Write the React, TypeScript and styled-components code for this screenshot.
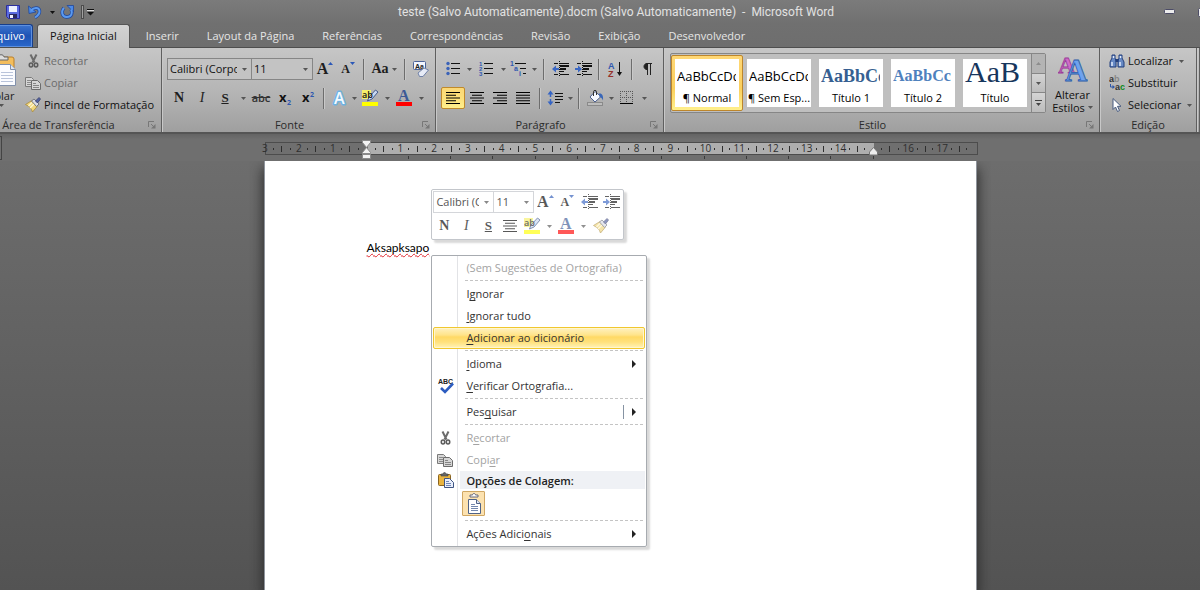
import React from "react";
import styled, { createGlobalStyle, css } from "styled-components";

const ui = `"Open Sans", "Noto Sans", "Liberation Sans", sans-serif`;
const serif = `"Liberation Serif", "DejaVu Serif", serif`;

const GlobalStyle = createGlobalStyle`
  *, *::before, *::after { box-sizing: border-box; }
  body {
    margin: 0;
    font-family: ${ui};
    font-size: 11px;
    line-height: 16px;
    color: #1e1e1e;
    background: #6f6f6f;
  }
  button, select {
    font: inherit;
    color: inherit;
    margin: 0;
    padding: 0;
    border: 0;
    background: none;
    border-radius: 0;
  }
  svg { display: block; flex: none; }
`;

/* ---------- window frame ---------- */

const Window = styled.div`
  display: flex;
  flex-direction: column;
  min-height: 100vh;
  overflow: hidden;
`;

const TitleBar = styled.header`
  display: flex;
  align-items: center;
  height: 24px;
  background: linear-gradient(#7b7b7b, #707070);
`;

const QuickAccess = styled.div`
  display: flex;
  align-items: center;
  width: 95px;
  padding-left: 5px;
`;

const QuickButton = styled.button<{ $w: number }>`
  display: flex;
  align-items: center;
  justify-content: center;
  width: ${(p) => p.$w}px;
  height: 20px;
`;

const QuickDivider = styled.span`
  width: 3px;
  height: 14px;
  margin: 0 2px;
  border: 1px solid #4c4c4c;
  background: #a0a0a0;
`;

const WindowTitle = styled.h1`
  flex: 1;
  margin: 0;
  text-align: center;
  font-family: Roboto, ${ui};
  font-size: 12px;
  font-weight: 400;
  line-height: 16px;
  color: #e2e2e2;
  white-space: pre;
`;

const WindowControls = styled.div`
  display: flex;
  gap: 22px;
  width: 63px;
  padding-left: 27px;
  overflow: hidden;
`;

const ControlButton = styled.button`
  flex: none;
  width: 12px;
  height: 12px;
  display: flex;
  align-items: center;
`;

/* ---------- tabs ---------- */

const TabBar = styled.nav`
  display: flex;
  height: 24px;
  background: linear-gradient(#707070, #6e6e6e);
  border-bottom: 1px solid #4e4e4e;
`;

const FileTab = styled.button`
  width: 58px;
  margin-left: -25px;
  padding-right: 7px;
  text-align: right;
  color: #ffffff;
  border: 1px solid #173f8c;
  border-bottom: 0;
  border-radius: 3px 3px 0 0;
  background: linear-gradient(#3c74cf, #1e53b4 50%, #2a68cc);
  box-shadow: inset 0 0 0 1px #5e90de;
`;

const Tab = styled.button<{ $active?: boolean }>`
  padding: 0 14px;
  color: #e6e6e6;
  white-space: nowrap;
  ${(p) =>
    p.$active &&
    css`
      height: 24px;
      margin: 0 2px 0 4px;
      padding: 0 12px 1px;
      color: #111;
      border: 1px solid #565656;
      border-bottom: 0;
      border-radius: 3px 3px 0 0;
      background: linear-gradient(#d3d3d3, #c6c6c6);
    `}
`;

/* ---------- ribbon ---------- */

const Ribbon = styled.div`
  display: flex;
  height: 86px;
  margin-left: -26px;
  border-bottom: 2px solid #555;
  background: linear-gradient(#c6c6c6, #b4b4b4 55%, #9f9f9f);
`;

const Group = styled.section<{ $w?: number }>`
  display: flex;
  flex-direction: column;
  flex: ${(p) => (p.$w ? `0 0 ${p.$w}px` : "1 1 0")};
  border-right: 1px solid #5f5f5f;
  box-shadow: inset 1px 0 0 #c8c8c8;
`;

const GroupBody = styled.div`
  display: flex;
  flex: 1;
  padding: 2px 0 0 5px;
`;

const GroupFooter = styled.footer`
  display: flex;
  align-items: center;
  height: 16px;
  padding: 2px 5px 0;
  color: #2b2b2b;
  text-align: center;
`;

const GroupName = styled.h2<{ $inset?: boolean }>`
  flex: 1;
  margin: 0;
  padding-right: ${(p) => (p.$inset ? 10 : 0)}px;
  font-size: 11px;
  font-weight: 400;
  white-space: nowrap;
`;

const Rows = styled.div`
  display: flex;
  flex-direction: column;
  padding-top: 7px;
  gap: 5px;
`;

const Row = styled.div`
  display: flex;
  align-items: center;
  height: 24px;
`;

const ToolButton = styled.button<{ $w?: number; $on?: boolean; $tight?: boolean }>`
  display: flex;
  align-items: center;
  justify-content: center;
  flex: none;
  width: ${(p) => p.$w ?? 24}px;
  height: 22px;
  gap: ${(p) => (p.$tight ? 0 : 3)}px;
  ${(p) =>
    p.$on &&
    css`
      border: 1px solid #c08a2b;
      border-radius: 2px;
      background: linear-gradient(#fbd877, #fde07a 50%, #fff08c);
    `}
`;

const Divider = styled.span`
  flex: none;
  width: 1px;
  height: 21px;
  margin: 0 4px;
  background: #6d6d6d;
  box-shadow: 1px 0 0 #c9c9c9;
`;

const Letter = styled.span<{ $size: number; $bold?: boolean; $italic?: boolean }>`
  font-family: ${serif};
  font-size: ${(p) => p.$size}px;
  font-weight: ${(p) => (p.$bold ? 700 : 400)};
  font-style: ${(p) => (p.$italic ? "italic" : "normal")};
  line-height: 16px;
`;

const Struck = styled.s`
  font-size: 11px;
  font-weight: 600;
  line-height: 16px;
  color: #333;
`;

const Combo = styled.label<{ $w: number; $light?: boolean }>`
  display: flex;
  align-items: center;
  flex: none;
  width: ${(p) => p.$w}px;
  height: 22px;
  padding: 0 4px 0 2px;
  border: 1px solid ${(p) => (p.$light ? "#d4d6da" : "#868686")};
  background: ${(p) => (p.$light ? "#ffffff" : "#c3c3c3")};
  color: ${(p) => (p.$light ? "#555" : "#111")};

  & + & {
    border-left-width: 0;
  }

  select {
    flex: 1;
    width: 0;
    height: 18px;
    margin-right: 5px;
    appearance: none;
    overflow: hidden;
    outline: 0;
  }
`;

/* clipboard */

const PasteButton = styled.button`
  display: flex;
  flex-direction: column;
  align-items: center;
  width: 40px;
  margin-left: 2px;
  padding-top: 4px;

  svg + span {
    margin-top: 2px;
  }
`;

const Stack = styled.div`
  display: flex;
  flex-direction: column;
  padding-left: 4px;
`;

const StackButton = styled.button<{ $dim?: boolean }>`
  display: flex;
  align-items: center;
  height: 22px;
  gap: 3px;
  white-space: nowrap;
  color: ${(p) => (p.$dim ? "#6c6c6c" : "#111")};

  svg:last-child:not(:first-child) {
    margin-left: 3px;
  }
`;

/* styles gallery */

const Gallery = styled.div`
  display: flex;
  height: 60px;
  margin: 3px 0 0 1px;
  border: 1px solid #868686;
  border-radius: 2px;
  background: #bfbfbf;
`;

const StyleCard = styled.button<{ $on?: boolean }>`
  display: flex;
  width: 72px;
  height: 56px;
  margin-top: 1px;
  padding: 3px;
  border: 1px solid transparent;
  border-radius: 2px;
  ${(p) =>
    p.$on &&
    css`
      border-color: #bd862c;
      background: linear-gradient(#ffd876, #fbcf5c 60%, #fff08c);
    `}
`;

const StyleFace = styled.span`
  display: flex;
  flex-direction: column;
  width: 64px;
  height: 48px;
  overflow: hidden;
  background: #fff;
  color: #000;
`;

const Sample = styled.span<{ $size: number; $color?: string; $serif?: boolean; $bold?: boolean }>`
  flex: none;
  height: 31px;
  margin: 0 3px 0 2px;
  overflow: hidden;
  text-align: left;
  white-space: nowrap;
  font-family: ${(p) => (p.$serif ? serif : ui)};
  font-size: ${(p) => p.$size}px;
  font-weight: ${(p) => (p.$bold ? 700 : 400)};
  line-height: ${(p) => (p.$size > 20 ? 26 : 34)}px;
  color: ${(p) => p.$color ?? "#000"};
`;

const SampleName = styled.span`
  text-align: center;
  white-space: nowrap;
`;

const GalleryScroll = styled.div`
  display: flex;
  flex-direction: column;
  width: 14px;
  border-left: 1px solid #868686;
`;

const ScrollButton = styled.button`
  display: flex;
  flex: 1;
  align-items: center;
  justify-content: center;
  background: linear-gradient(#d4d4d4, #bcbcbc);

  & + & {
    border-top: 1px solid #868686;
  }
  &:disabled {
    background: #b4b4b4;
  }
`;

const ChangeStyles = styled.button`
  display: flex;
  flex-direction: column;
  align-items: center;
  flex: 1;
  padding-top: 4px;
  line-height: 13px;
  color: #111;

  span {
    display: flex;
    align-items: center;
    gap: 3px;
  }
  svg + span {
    margin-top: 5px;
  }
`;

/* ---------- workspace ---------- */

const RulerBar = styled.div`
  display: flex;
  height: 27px;
  padding-top: 8px;
  background: linear-gradient(#646464, #6f6f6f 20%);
`;

const TabStopBox = styled.div`
  width: 2px;
  height: 24px;
  margin-top: -6px;
  border: 1px solid #444;
  border-left: 0;
`;

const RulerColumn = styled.div`
  width: 713px;
  margin: 0 auto;
  position: relative;
  left: 20px;
`;

const Ruler = styled.div`
  display: flex;
  height: 13px;
  border: 1px solid #4c4c4c;
  color: #2e2e2e;
  font-size: 10px;
  line-height: 11px;
`;

const RulerZone = styled.div<{ $w?: number; $lit?: boolean }>`
  display: flex;
  flex: ${(p) => (p.$w ? `0 0 ${p.$w}px` : "1")};
  background: ${(p) => (p.$lit ? "#aeaeae" : "transparent")};
`;

const RulerCell = styled.span<{ $w?: number }>`
  display: grid;
  grid-template-columns: repeat(4, 1fr);
  justify-items: center;
  align-items: center;
  flex: ${(p) => (p.$w ? `0 0 ${p.$w}px` : "1")};
  margin: 0 5px 0 -5px;
  height: 11px;

  i {
    width: 1px;
    height: 2px;
    background: #2e2e2e;
  }
  i:nth-child(3) {
    height: 6px;
  }
`;

const TabStops = styled.div`
  display: flex;
  height: 6px;
  margin: 0 104px 0 102px;

  span {
    flex: 1;
    height: 3px;
    margin-top: 1px;
    border-right: 1px solid #3a3a3a;
  }
`;

const Marker = styled.span<{ $x: number; $y: number }>`
  position: absolute;
  left: ${(p) => p.$x}px;
  top: ${(p) => p.$y}px;
`;

const Workspace = styled.main`
  display: flex;
  flex: 1;
  padding-left: 40px;
  background: linear-gradient(#6d6d6d, #535353);
`;

const Page = styled.article`
  width: 713px;
  margin: 0 auto;
  padding: 79px 102px 0;
  background: #fff;
  border-left: 1px solid #8f949c;
  border-right: 1px solid #8f949c;
  box-shadow: 0 8px 12px 1px #2c2c2c;
  clip-path: inset(0 -14px 0 -14px);
`;

const Word = styled.span`
  position: relative;
  display: inline-block;
  padding-right: 2px;
  font-family: Lato, ${ui};
  font-size: 12px;
  line-height: 16px;
  color: #000;
`;

const Misspelled = styled.span`
  text-decoration: underline wavy #e0282e 1px;
  text-underline-offset: 1px;
  text-decoration-skip-ink: none;
`;

const MiniToolbar = styled.div`
  position: absolute;
  left: 100%;
  bottom: 16px;
  width: 193px;
  padding: 0 2px 1px 1px;
  border: 1px solid #c3c6cb;
  border-radius: 2px;
  background: #fff;
  box-shadow: 3px 3px 2px #d9d9d9;
  font-family: ${ui};
  font-size: 11px;
`;

const Faded = styled.span`
  display: contents;

  button > * {
    opacity: 0.65;
  }
`;

/* context menu */

const Menu = styled.ul`
  position: absolute;
  left: 100%;
  top: 15px;
  width: 216px;
  margin: 0;
  padding: 1px;
  list-style: none;
  border: 1px solid #a7abb0;
  border-radius: 2px;
  background: linear-gradient(90deg, #fff 25px, #e2e3e6 25px, #e2e3e6 26px, #fff 26px);
  box-shadow: 3px 3px 2px #d9d9d9;
  font-family: ${ui};
  font-size: 11px;
`;

const MenuButton = styled.button<{ $hot?: boolean }>`
  display: grid;
  grid-template-columns: 33px 1fr auto;
  align-items: center;
  width: 100%;
  height: 22px;
  padding-right: 9px;
  text-align: left;
  white-space: nowrap;
  color: #333;

  &:disabled {
    color: #a3a3a3;
  }
  u {
    text-underline-offset: 2px;
    text-decoration-thickness: 1px;
    text-decoration-skip-ink: none;
  }
  ${(p) =>
    p.$hot &&
    css`
      grid-template-columns: 32px 1fr auto;
      border: 1px solid #f0c72f;
      border-radius: 2px;
      background: linear-gradient(#fff1c1, #ffe48a 35%, #ffd965 45%, #ffe17c 70%, #fff3b8);
      box-shadow: inset 0 0 0 1px #fff6cf;
    `}
`;

const MenuIcon = styled.span`
  display: flex;
  padding-left: 4px;
`;

const SubArrow = styled.span<{ $split?: boolean }>`
  display: flex;
  align-items: center;
  height: 14px;
  padding-left: 8px;
  border-left: ${(p) => (p.$split ? "1px solid #8693a3" : "0")};
`;

const MenuRule = styled.li`
  height: 4px;
  margin-left: 32px;
  padding-top: 1px;

  &::before {
    content: "";
    display: block;
    height: 1px;
    background: repeating-linear-gradient(90deg, #c4c4c4 0 3px, transparent 3px 5px);
  }
`;

const MenuHeading = styled.li`
  display: grid;
  grid-template-columns: 27px 1fr;
  align-items: center;
  height: 18px;

  strong {
    padding: 1px 0 0 6px;
    line-height: 17px;
    font-weight: 600;
    color: #222;
    background: #eff1f5;
  }
`;

const PasteOptions = styled.li`
  height: 30px;
  padding: 2px 0 0 29px;
`;

const PasteOption = styled.button`
  display: flex;
  align-items: center;
  justify-content: center;
  width: 23px;
  height: 25px;
  border: 1px solid #d0a763;
  border-radius: 1px;
  background: #fce2b0;
`;

/* ---------- icons ---------- */

const Down = ({ c = "#555" }: { c?: string }) => (
  <svg width="5" height="3" viewBox="0 0 5 3" aria-hidden="true">
    <path d="M0 0h5L2.500 3z" fill={c} />
  </svg>
);

const Right = () => (
  <svg width="4" height="8" viewBox="0 0 4 8" aria-hidden="true">
    <path d="M0 0l4 4-4 4z" fill="#222" />
  </svg>
);

const Launcher = () => (
  <svg width="8" height="8" viewBox="0 0 8 8" aria-hidden="true">
    <path d="M.5 6V.5H6" stroke="#777" fill="none" />
    <path d="M3 3l3 3" stroke="#777" />
    <path d="M7.500 3v4.500H3z" fill="#777" />
  </svg>
);

const SaveIcon = () => (
  <svg width="16" height="16" viewBox="0 0 16 16" aria-hidden="true">
    <path d="M1.500 1.500h13v13h-11l-2-2z" fill="#5b6be0" stroke="#2c2f9c" />
    <path d="M4 2h8v6H4z" fill="#eef2ff" />
    <path d="M4 10h8v4H4z" fill="#2a2a5c" />
    <path d="M5 11h3v3H5z" fill="#f4f4ff" />
  </svg>
);

const UndoIcon = () => (
  <svg width="14" height="14" viewBox="0 0 14 14" aria-hidden="true">
    <path d="M3 5.500C6 2 11 2 11.500 6c.3 3-2 5-4.500 6.500" fill="none" stroke="#20479c" strokeWidth="3.400" />
    <path d="M.5 1l.5 7.500 7-1.500z" fill="#4c8ae8" stroke="#20479c" strokeWidth=".8" />
    <path d="M3 5.500C6 2 11 2 11.500 6c.3 3-2 5-4.500 6.500" fill="none" stroke="#5a9af0" strokeWidth="2" />
  </svg>
);

const RedoIcon = () => (
  <svg width="14" height="14" viewBox="0 0 14 14" aria-hidden="true">
    <path d="M4 3C1 6 1.500 11.500 6.500 12c5 .2 6.500-4 4.500-7.500" fill="none" stroke="#20479c" strokeWidth="3.400" />
    <path d="M7 .5h6.500V7z" fill="#4c8ae8" stroke="#20479c" strokeWidth=".8" />
    <path d="M4 3C1 6 1.500 11.500 6.500 12c5 .2 6.500-4 4.500-7.500" fill="none" stroke="#5a9af0" strokeWidth="2" />
  </svg>
);

const CustomizeIcon = () => (
  <svg width="7" height="7" viewBox="0 0 7 7" aria-hidden="true">
    <path d="M0 .5h7" stroke="#111" />
    <path d="M0 1.500h7" stroke="#ddd" />
    <path d="M0 3h7L3.500 6.500z" fill="#111" />
  </svg>
);

const PasteBig = () => (
  <svg width="32" height="32" viewBox="0 0 32 32" aria-hidden="true">
    <rect x="3" y="3" width="26" height="27" rx="2" fill="#f3bd5c" stroke="#b97f2a" />
    <path d="M9 6V3h4c0-3 6-3 6 0h4v3z" fill="#ddd" stroke="#666" />
    <path d="M13.500 10.500h12l5 5v16h-17z" fill="#fbfcff" stroke="#8190aa" />
    <path d="M25.500 10.500v5h5" fill="#dfe6f4" stroke="#8190aa" />
    <path d="M16 18.500h12M16 21.500h12M16 24.500h12M16 27.500h12" stroke="#b8c3da" />
  </svg>
);

const CutIcon = () => (
  <svg width="16" height="16" viewBox="0 0 16 16" aria-hidden="true">
    <path d="M5.500 1.500l4 8M11.500 1.500l-4 8" stroke="#6c6c6c" strokeWidth="2" />
    <ellipse cx="6" cy="12" rx="1.700" ry="2" fill="none" stroke="#5c5c5c" strokeWidth="1.600" />
    <ellipse cx="11" cy="12" rx="1.700" ry="2" fill="none" stroke="#5c5c5c" strokeWidth="1.600" />
  </svg>
);

const CopyIcon = () => (
  <svg width="16" height="16" viewBox="0 0 16 16" aria-hidden="true">
    <path d="M.5 2.500h6l2 2v7h-8z" fill="#d6d6d6" stroke="#7a7a7a" />
    <path d="M2 5.500h4M2 7.500h4M2 9.500h4" stroke="#8a8a8a" />
    <path d="M6.500 5.500h6l3 3v6h-9z" fill="#d6d6d6" stroke="#6c6c6c" />
    <path d="M8 8.500h3M8 10.500h6M8 12.500h6" stroke="#858585" />
  </svg>
);

const BrushIcon = () => (
  <svg width="16" height="16" viewBox="0 0 16 16" aria-hidden="true">
    <path d="M.5 7.500l6.500-4 5.500 5.500-5 6c-1-3.500-3-5.500-7-7.500z" fill="#f0d67c" stroke="#a98a3a" strokeWidth=".8" />
    <path d="M5 11l4-4M3.500 9L7 5.500" stroke="#fff6cf" strokeWidth="1.300" />
    <path d="M6.500 4L9 2l5 5-2.500 2.500z" fill="#d9dbe4" stroke="#60626e" strokeWidth=".8" />
    <path d="M10.500 4L14 .5 15.500 2 12.500 6z" fill="#5361a0" stroke="#39406c" strokeWidth=".8" />
  </svg>
);

const GrowMark = ({ up }: { up?: boolean }) => (
  <svg width="5" height="16" viewBox="0 0 5 16" aria-hidden="true">
    <path d={up ? "M0 4h5L2.500 1z" : "M0 1h5L2.500 4z"} fill="#2b58b8" />
  </svg>
);

const ClearFormatIcon = () => (
  <svg width="18" height="18" viewBox="0 0 18 18" aria-hidden="true">
    <rect x="1.500" y="1.500" width="12" height="8" rx="1" fill="#f2f6ff" stroke="#4c6397" />
    <text x="3" y="8.500" fontSize="7" fontWeight="700" fontFamily="Liberation Sans, sans-serif" fill="#222">Aa</text>
    <path d="M6 13l6-5 4.500 2-5.500 6.500H7.500z" fill="#e7ebf6" stroke="#7182a8" />
  </svg>
);

const GlowAIcon = () => (
  <svg width="18" height="18" viewBox="0 0 18 18" aria-hidden="true">
    <text x="4" y="15" fontSize="16" fontWeight="600" fontFamily="Open Sans, sans-serif" fill="#f4faff" stroke="#6fb2e0" strokeWidth="3" paintOrder="stroke" strokeLinejoin="round">A</text>
  </svg>
);

const HighlightIcon = () => (
  <svg width="18" height="18" viewBox="0 0 18 18" aria-hidden="true">
    <rect x="1" y="1" width="9" height="9" fill="#f6f06a" />
    <path d="M14.500 1l2.500 2-6 7-4.500 2 1.500-4z" fill="#c9d8f2" stroke="#43598a" />
    <text x="1" y="9" fontSize="9" fontWeight="600" fontFamily="Open Sans, sans-serif" fill="#111">ab</text>
    <rect x="1" y="13" width="16" height="4" fill="#ffff00" />
  </svg>
);

const FontColorIcon = () => (
  <svg width="18" height="18" viewBox="0 0 18 18" aria-hidden="true">
    <text x="3" y="12" fontSize="16" fontWeight="700" fontFamily="Liberation Serif, serif" fill="#3c5a96">A</text>
    <rect x="1" y="13" width="16" height="4" fill="#ff0000" />
  </svg>
);

const BulletsIcon = () => (
  <svg width="16" height="16" viewBox="0 0 16 16" aria-hidden="true">
    <g fill="#3a62b8">
      <circle cx="3" cy="2.500" r="1.700" />
      <circle cx="3" cy="7.500" r="1.700" />
      <circle cx="3" cy="12.500" r="1.700" />
    </g>
    <path d="M6 2.500h9M6 7.500h9M6 12.500h9" stroke="#111" />
  </svg>
);

const NumbersIcon = () => (
  <svg width="16" height="16" viewBox="0 0 16 16" aria-hidden="true">
    <g fill="#2f57b0" fontSize="6" fontWeight="700" fontFamily="Liberation Sans, sans-serif">
      <text x="1" y="5">1</text>
      <text x="1" y="10">2</text>
      <text x="1" y="15">3</text>
    </g>
    <path d="M6 2.500h9M6 7.500h9M6 12.500h9" stroke="#111" />
  </svg>
);

const MultilevelIcon = () => (
  <svg width="18" height="16" viewBox="0 0 18 16" aria-hidden="true">
    <g fill="#2f57b0" fontSize="7" fontWeight="700" fontFamily="Liberation Sans, sans-serif">
      <text x="1" y="5">1</text>
      <text x="5" y="10">a</text>
      <text x="10" y="15">i</text>
    </g>
    <path d="M6 2.500h11M11 7.500h6M14 12.500h3" stroke="#111" />
  </svg>
);

const IndentIcon = ({ dir }: { dir: "in" | "out" }) => (
  <svg width="17" height="16" viewBox="0 0 17 16" aria-hidden="true">
    <path d="M2 2.500h4M8 2.500h9M2 13.500h4M8 13.500h9M8 10.500h4" stroke="#111" />
    <path d="M8 5h9M8 8h6" stroke="#111" strokeWidth="2" />
    <path d="M7.500 0v16" stroke="#111" strokeDasharray="1 1" />
    <path d={dir === "out" ? "M0 8l4-3.500V7h3v2H4v2.500z" : "M7 8L3 4.500V7H0v2h3v2.500z"} fill="#3a67c4" />
  </svg>
);

const SortIcon = () => (
  <svg width="16" height="16" viewBox="0 0 16 16" aria-hidden="true">
    <g fontSize="9" fontWeight="700" fontFamily="Liberation Sans, sans-serif">
      <text x="1" y="7.500" fill="#2f57b0">A</text>
      <text x="1" y="15.500" fill="#96302a">Z</text>
    </g>
    <path d="M12.500 1v11" stroke="#111" />
    <path d="M10 11h5l-2.500 4z" fill="#111" />
  </svg>
);

const PilcrowIcon = () => (
  <svg width="12" height="14" viewBox="0 0 12 14" aria-hidden="true">
    <path d="M5 7.500C1 7.500 1 1.500 5 1.500z" fill="#222" stroke="#222" />
    <path d="M5 1.500h5M5.500 1v12M8.500 1v12" stroke="#222" />
  </svg>
);

const LINES = {
  left: "M1 .5h14M1 3.500h10M1 6.500h14M1 9.500h10M1 12.500h14",
  center: "M1 .5h14M3 3.500h10M1 6.500h14M3 9.500h10M1 12.500h14",
  right: "M1 .5h14M5 3.500h10M1 6.500h14M5 9.500h10M1 12.500h14",
  justify: "M1 .5h14M1 3.500h14M1 6.500h14M1 9.500h14M1 12.500h14",
};

const AlignIcon = ({ kind }: { kind: keyof typeof LINES }) => (
  <svg width="16" height="12" viewBox="0 0 16 13" preserveAspectRatio="none" aria-hidden="true">
    <path d={LINES[kind]} stroke="#000" strokeWidth="1.200" />
  </svg>
);

const SpacingIcon = () => (
  <svg width="16" height="16" viewBox="0 0 16 16" aria-hidden="true">
    <path d="M3.500 3v10" stroke="#3564c4" strokeWidth="1.500" strokeDasharray="4 2" />
    <path d="M.5 4.500h6l-3-4zM.5 11.500h6l-3 4z" fill="#3564c4" />
    <path d="M8 3.500h8M8 6.500h8M8 9.500h8M8 12.500h5" stroke="#111" />
  </svg>
);

const BucketIcon = () => (
  <svg width="17" height="16" viewBox="0 0 17 16" aria-hidden="true">
    <path d="M8 1.500l6 5-6 5.500-5-5z" fill="#f5f8ff" stroke="#4a5f8f" />
    <path d="M6.500 6V1.500c0-1.500 3-1.500 3 0V5" fill="none" stroke="#333" />
    <path d="M12 3.500c3-.5 4.500 2 4 7-1-2-2-3.500-3.500-3.500z" fill="#3866b8" />
    <rect x=".5" y="12.500" width="15" height="3" fill="#bcbcbc" stroke="#8a8a8a" />
  </svg>
);

const BordersIcon = () => (
  <svg width="14" height="14" viewBox="0 0 14 14" aria-hidden="true">
    <path d="M0 .5h13M0 6.500h13M.5 0v12M6.500 0v12M12.500 0v12" stroke="#555" strokeDasharray="1 1" />
    <path d="M0 12.500h13" stroke="#000" />
  </svg>
);

const ChangeStylesIcon = () => (
  <svg width="30" height="29" viewBox="0 0 30 29" aria-hidden="true">
    <g fontFamily="Liberation Serif, serif" fontWeight="700">
      <text x="0" y="19" fontSize="24" fill="#d06cc8" stroke="#9a3c98" strokeWidth=".8">A</text>
      <text x="7" y="27" fontSize="31" fill="#6ea2ee" stroke="#2c5ba8" strokeWidth=".8">A</text>
    </g>
  </svg>
);

const BinocularsIcon = () => (
  <svg width="16" height="15" viewBox="0 0 16 15" aria-hidden="true">
    <path d="M3 1h3v3l1 3v6H1V8l2-4zM10 1h3v3l2 4v5H9V7l1-3z" fill="#6789c4" stroke="#233f7c" />
    <path d="M6.500 5h3v3h-3z" fill="#233f7c" />
    <path d="M3 8v4M11 8v4M4.500 2v2M11.500 2v2" stroke="#e3ecfb" strokeWidth="1.500" />
  </svg>
);

const ReplaceIcon = () => (
  <svg width="16" height="16" viewBox="0 0 16 16" aria-hidden="true">
    <g fontFamily="Liberation Sans, sans-serif" fontWeight="700" fontSize="9">
      <text x="0" y="7" fill="#333">a</text>
      <text x="5" y="7" fill="#888">b</text>
      <text x="6" y="15" fill="#333">a</text>
      <text x="11" y="15" fill="#0d8a1c">c</text>
    </g>
    <path d="M1.500 9v3H4" fill="none" stroke="#2d56a8" />
    <path d="M3.500 10l2.500 2-2.500 2z" fill="#2d56a8" />
  </svg>
);

const CursorIcon = () => (
  <svg width="16" height="16" viewBox="0 0 16 16" aria-hidden="true">
    <path d="M4 1.500v11l2.500-2.500 2 4.500 2-1-2-4.200H12z" fill="#fff" stroke="#465a80" />
  </svg>
);

const SpellIcon = () => (
  <svg width="18" height="16" viewBox="0 0 18 16" aria-hidden="true">
    <text x="1" y="6" fontSize="7" fontWeight="700" fontFamily="Liberation Sans, sans-serif" fill="#222">ABC</text>
    <path d="M4 10l4 4 8-8.500" fill="none" stroke="#2c5cc0" strokeWidth="2.600" />
  </svg>
);

const PasteSmall = () => (
  <svg width="17" height="16" viewBox="0 0 17 16" aria-hidden="true">
    <rect x="1.500" y="2.500" width="12" height="11" rx="1" fill="#e9b440" stroke="#8a6420" />
    <path d="M4 4V2h2c0-2 3-2 3 0h2v2z" fill="#666" stroke="#444" strokeWidth=".6" />
    <path d="M7.500 6.500h5l4 4v5h-9z" fill="#e8eefb" stroke="#3f5583" />
    <path d="M9 9.500h3M9 11.500h5M9 13.500h5" stroke="#6f86b5" />
  </svg>
);

const KeepSourceIcon = () => (
  <svg width="18" height="22" viewBox="0 0 18 22" aria-hidden="true">
    <path d="M5 4V2h2.500c0-2 3-2 3 0H13v2z" fill="#fff" stroke="#667" />
    <path d="M3.500 6.500h8l4 4v10h-12z" fill="#fff" stroke="#4f6287" />
    <path d="M11.500 6.500v4h4" fill="#dfe6f4" stroke="#4f6287" />
    <path d="M6 11.500h4M6 13.500h7M6 15.500h7M6 17.500h7" stroke="#7488ae" />
  </svg>
);

/* ---------- composed parts ---------- */

type GroupProps = { name: string; width?: number; launcher?: boolean; children: React.ReactNode };

const RibbonGroup = ({ name, width, launcher = true, children }: GroupProps) => (
  <Group $w={width}>
    <GroupBody>{children}</GroupBody>
    <GroupFooter>
      <GroupName $inset={launcher}>{name}</GroupName>
      {launcher && (
        <button aria-label={`Opções de ${name}`}>
          <Launcher />
        </button>
      )}
    </GroupFooter>
  </Group>
);

const Select = ({ label, value, width, light }: { label: string; value: string; width: number; light?: boolean }) => (
  <Combo $w={width} $light={light}>
    <select aria-label={label} defaultValue={value}>
      <option>{value}</option>
    </select>
    <Down c={light ? "#888" : "#555"} />
  </Combo>
);

const Arrow = ({ width = 10, label }: { width?: number; label: string }) => (
  <ToolButton $w={width} aria-label={label}>
    <Down />
  </ToolButton>
);

const STYLES = [
  { name: "¶ Normal", sample: "AaBbCcDd", size: 13, on: true },
  { name: "¶ Sem Esp...", sample: "AaBbCcDd", size: 13 },
  { name: "Título 1", sample: "AaBbCc", size: 18, serif: true, bold: true, color: "#365f91" },
  { name: "Título 2", sample: "AaBbCc", size: 16, serif: true, bold: true, color: "#4f81bd" },
  { name: "Título", sample: "AaB", size: 30, serif: true, color: "#17365d" },
];

const TABS = ["Inserir", "Layout da Página", "Referências", "Correspondências", "Revisão", "Exibição", "Desenvolvedor"];

const Cells = ({ labels, width }: { labels: string[]; width?: number }) => (
  <>
    {labels.map((l, i) => (
      <RulerCell key={i} $w={width}>
        <span>{l}</span>
        <i />
        <i />
        <i />
      </RulerCell>
    ))}
  </>
);

type ItemProps = {
  icon?: React.ReactNode;
  children: React.ReactNode;
  disabled?: boolean;
  hot?: boolean;
  sub?: boolean;
  split?: boolean;
};

const MenuItem = ({ icon, children, disabled, hot, sub, split }: ItemProps) => (
  <li>
    <MenuButton disabled={disabled} $hot={hot}>
      <MenuIcon>{icon}</MenuIcon>
      <span>{children}</span>
      {sub && (
        <SubArrow $split={split}>
          <Right />
        </SubArrow>
      )}
    </MenuButton>
  </li>
);

export default function App() {
  return (
    <Window>
      <GlobalStyle />
      <TitleBar>
        <QuickAccess>
          <QuickButton $w={16} aria-label="Salvar"><SaveIcon /></QuickButton>
          <QuickButton $w={28} aria-label="Desfazer"><UndoIcon /></QuickButton>
          <QuickButton $w={6} aria-label="Opções de desfazer"><Down c="#111" /></QuickButton>
          <QuickButton $w={24} aria-label="Refazer"><RedoIcon /></QuickButton>
          <QuickDivider />
          <QuickButton $w={8} aria-label="Personalizar"><CustomizeIcon /></QuickButton>
        </QuickAccess>
        <WindowTitle>teste (Salvo Automaticamente).docm (Salvo Automaticamente)  -  Microsoft Word</WindowTitle>
        <WindowControls>
          <ControlButton aria-label="Minimizar">
            <svg width="12" height="6" viewBox="0 0 12 6"><rect x=".5" y=".5" width="10" height="4" rx="1" fill="#ececec" stroke="#4c4c66" /></svg>
          </ControlButton>
          <ControlButton aria-label="Maximizar">
            <svg width="12" height="9" viewBox="0 0 12 9"><rect x=".5" y=".5" width="11" height="8" rx="1" fill="#ececec" stroke="#4c4c66" /></svg>
          </ControlButton>
        </WindowControls>
      </TitleBar>

      <TabBar>
        <FileTab>Arquivo</FileTab>
        <Tab $active>Página Inicial</Tab>
        {TABS.map((t) => (
          <Tab key={t}>{t}</Tab>
        ))}
      </TabBar>

      <Ribbon>
        <RibbonGroup name="Área de Transferência" width={188}>
          <PasteButton>
            <PasteBig />
            <span>Colar</span>
            <Down />
          </PasteButton>
          <Stack>
            <StackButton $dim><CutIcon />Recortar</StackButton>
            <StackButton $dim><CopyIcon />Copiar</StackButton>
            <StackButton><BrushIcon />Pincel de Formatação</StackButton>
          </Stack>
        </RibbonGroup>

        <RibbonGroup name="Fonte" width={274}>
          <Rows>
            <Row>
              <Select label="Fonte" value="Calibri (Corpo)" width={85} />
              <Select label="Tamanho da fonte" value="11" width={61} />
              <ToolButton $tight aria-label="Aumentar fonte"><Letter $size={16} $bold>A</Letter><GrowMark up /></ToolButton>
              <ToolButton $tight $w={22} aria-label="Diminuir fonte"><Letter $size={12} $bold>A</Letter><GrowMark /></ToolButton>
              <Divider />
              <ToolButton $w={32} aria-label="Maiúsculas e minúsculas"><Letter $size={14} $bold>Aa</Letter><Down /></ToolButton>
              <Divider />
              <ToolButton aria-label="Limpar formatação"><ClearFormatIcon /></ToolButton>
            </Row>
            <Row>
              <ToolButton aria-label="Negrito"><Letter $size={14} $bold>N</Letter></ToolButton>
              <ToolButton $w={22} aria-label="Itálico"><Letter $size={14} $italic>I</Letter></ToolButton>
              <ToolButton aria-label="Sublinhado"><Letter $size={13} $bold><u>S</u></Letter></ToolButton>
              <Arrow width={12} label="Opções de sublinhado" />
              <ToolButton aria-label="Tachado"><Struck>abc</Struck></ToolButton>
              <ToolButton aria-label="Subscrito">
                <svg width="16" height="16" viewBox="0 0 16 16">
                  <text x="2" y="12" fontSize="13" fontWeight="700" fontFamily="Open Sans, sans-serif" fill="#111">x</text>
                  <text x="10" y="15" fontSize="7" fontWeight="700" fontFamily="Open Sans, sans-serif" fill="#2f57b0">2</text>
                </svg>
              </ToolButton>
              <ToolButton $w={22} aria-label="Sobrescrito">
                <svg width="16" height="16" viewBox="0 0 16 16">
                  <text x="2" y="12" fontSize="13" fontWeight="700" fontFamily="Open Sans, sans-serif" fill="#111">x</text>
                  <text x="10" y="7" fontSize="7" fontWeight="700" fontFamily="Open Sans, sans-serif" fill="#2f57b0">2</text>
                </svg>
              </ToolButton>
              <Divider />
              <ToolButton $w={22} aria-label="Efeitos de texto"><GlowAIcon /></ToolButton>
              <Arrow width={8} label="Opções de efeitos" />
              <ToolButton aria-label="Realce"><HighlightIcon /></ToolButton>
              <Arrow label="Cores de realce" />
              <ToolButton aria-label="Cor da fonte"><FontColorIcon /></ToolButton>
              <Arrow label="Cores da fonte" />
            </Row>
          </Rows>
        </RibbonGroup>

        <RibbonGroup name="Parágrafo" width={228}>
          <Rows>
            <Row>
              <ToolButton aria-label="Marcadores"><BulletsIcon /></ToolButton>
              <Arrow width={8} label="Tipos de marcador" />
              <ToolButton $w={26} aria-label="Numeração"><NumbersIcon /></ToolButton>
              <Arrow width={8} label="Tipos de numeração" />
              <ToolButton $w={22} aria-label="Lista de vários níveis"><MultilevelIcon /></ToolButton>
              <Arrow label="Tipos de lista" />
              <Divider />
              <ToolButton aria-label="Diminuir recuo"><IndentIcon dir="out" /></ToolButton>
              <ToolButton $w={22} aria-label="Aumentar recuo"><IndentIcon dir="in" /></ToolButton>
              <Divider />
              <ToolButton aria-label="Classificar"><SortIcon /></ToolButton>
              <Divider />
              <ToolButton aria-label="Mostrar tudo"><PilcrowIcon /></ToolButton>
            </Row>
            <Row>
              <ToolButton $on aria-label="Alinhar à esquerda"><AlignIcon kind="left" /></ToolButton>
              <ToolButton aria-label="Centralizar"><AlignIcon kind="center" /></ToolButton>
              <ToolButton $w={22} aria-label="Alinhar à direita"><AlignIcon kind="right" /></ToolButton>
              <ToolButton aria-label="Justificar"><AlignIcon kind="justify" /></ToolButton>
              <Divider />
              <ToolButton $w={22} aria-label="Espaçamento"><SpacingIcon /></ToolButton>
              <Arrow width={8} label="Opções de espaçamento" />
              <Divider />
              <ToolButton aria-label="Sombreamento"><BucketIcon /></ToolButton>
              <Arrow width={8} label="Cores de sombreamento" />
              <ToolButton aria-label="Bordas"><BordersIcon /></ToolButton>
              <Arrow label="Opções de borda" />
            </Row>
          </Rows>
        </RibbonGroup>

        <RibbonGroup name="Estilo">
          <Gallery>
            {STYLES.map((s) => (
              <StyleCard key={s.name} $on={s.on}>
                <StyleFace>
                  <Sample $size={s.size} $serif={s.serif} $bold={s.bold} $color={s.color}>{s.sample}</Sample>
                  <SampleName>{s.name}</SampleName>
                </StyleFace>
              </StyleCard>
            ))}
            <GalleryScroll>
              <ScrollButton disabled aria-label="Linha anterior">
                <svg width="5" height="3" viewBox="0 0 5 3"><path d="M0 3h5L2.500 0z" fill="#8c8c8c" /></svg>
              </ScrollButton>
              <ScrollButton aria-label="Próxima linha"><Down /></ScrollButton>
              <ScrollButton aria-label="Mais">
                <svg width="7" height="6" viewBox="0 0 7 6"><path d="M0 .5h7" stroke="#444" /><path d="M1 3h5L3.500 6z" fill="#444" /></svg>
              </ScrollButton>
            </GalleryScroll>
          </Gallery>
          <ChangeStyles>
            <ChangeStylesIcon />
            <span>Alterar</span>
            <span>Estilos <Down /></span>
          </ChangeStyles>
        </RibbonGroup>

        <RibbonGroup name="Edição" width={97} launcher={false}>
          <Stack>
            <StackButton><BinocularsIcon />Localizar<Down /></StackButton>
            <StackButton><ReplaceIcon />Substituir</StackButton>
            <StackButton><CursorIcon />Selecionar<Down /></StackButton>
          </Stack>
        </RibbonGroup>
        <Group $w={3} />
      </Ribbon>

      <RulerBar>
        <TabStopBox />
        <RulerColumn>
          <Ruler>
            <RulerZone $w={101}><Cells labels={["3", "2", "1"]} width={34} /></RulerZone>
            <RulerZone $lit><Cells labels={["", ...Array.from({ length: 14 }, (_, i) => String(i + 1))]} /></RulerZone>
            <RulerZone $w={103}><Cells labels={["", "16", "17"]} width={34} /></RulerZone>
          </Ruler>
          <TabStops>
            {Array.from({ length: 12 }, (_, i) => (
              <span key={i} />
            ))}
          </TabStops>
          <Marker $x={97} $y={-2}>
            <svg width="9" height="20" viewBox="0 0 9 20" aria-hidden="true">
              <path d="M.5.500h8v2l-4 5-4-5zM.5 13.500v-1l4-5 4 5v1z" fill="#f2f2f2" stroke="#8a8a8a" />
              <rect x=".5" y="14.500" width="8" height="4" fill="#f2f2f2" stroke="#8a8a8a" />
            </svg>
          </Marker>
          <Marker $x={604} $y={5}>
            <svg width="9" height="9" viewBox="0 0 9 9" aria-hidden="true">
              <path d="M.5 8V5l4-4.500 4 4.500v3z" fill="#eee" stroke="#777" />
            </svg>
          </Marker>
        </RulerColumn>
      </RulerBar>

      <Workspace>
        <Page>
          <Word>
            <Misspelled>Aksapksapo</Misspelled>
            <MiniToolbar>
              <Row>
                <Select light label="Fonte" value="Calibri (Corpo)" width={61} />
                <Select light label="Tamanho da fonte" value="11" width={40} />
                <Faded>
                  <ToolButton $tight $w={22} aria-label="Aumentar fonte"><Letter $size={16} $bold>A</Letter><GrowMark up /></ToolButton>
                  <ToolButton $tight $w={22} aria-label="Diminuir fonte"><Letter $size={12} $bold>A</Letter><GrowMark /></ToolButton>
                  <ToolButton $w={22} aria-label="Diminuir recuo"><IndentIcon dir="out" /></ToolButton>
                  <ToolButton $w={22} aria-label="Aumentar recuo"><IndentIcon dir="in" /></ToolButton>
                </Faded>
              </Row>
              <Row>
                <Faded>
                  <ToolButton $w={22} aria-label="Negrito"><Letter $size={14} $bold>N</Letter></ToolButton>
                  <ToolButton $w={22} aria-label="Itálico"><Letter $size={14} $italic>I</Letter></ToolButton>
                  <ToolButton $w={22} aria-label="Sublinhado"><Letter $size={13} $bold><u>S</u></Letter></ToolButton>
                  <ToolButton $w={22} aria-label="Centralizar"><AlignIcon kind="center" /></ToolButton>
                  <ToolButton $w={22} aria-label="Realce"><HighlightIcon /></ToolButton>
                  <Arrow width={12} label="Cores de realce" />
                  <ToolButton $w={22} aria-label="Cor da fonte"><FontColorIcon /></ToolButton>
                  <Arrow width={12} label="Cores da fonte" />
                  <ToolButton aria-label="Pincel"><BrushIcon /></ToolButton>
                </Faded>
              </Row>
            </MiniToolbar>

            <Menu>
              <MenuItem disabled>(Sem Sugestões de Ortografia)</MenuItem>
              <MenuRule />
              <MenuItem>I<u>g</u>norar</MenuItem>
              <MenuItem><u>I</u>gnorar tudo</MenuItem>
              <MenuItem hot><u>A</u>dicionar ao dicionário</MenuItem>
              <MenuRule />
              <MenuItem sub><u>I</u>dioma</MenuItem>
              <MenuItem icon={<SpellIcon />}><u>V</u>erificar Ortografia...</MenuItem>
              <MenuRule />
              <MenuItem sub split>Pes<u>q</u>uisar</MenuItem>
              <MenuRule />
              <MenuItem disabled icon={<CutIcon />}>R<u>e</u>cortar</MenuItem>
              <MenuItem disabled icon={<CopyIcon />}>Copi<u>a</u>r</MenuItem>
              <MenuHeading>
                <MenuIcon><PasteSmall /></MenuIcon>
                <strong>Opções de Colagem:</strong>
              </MenuHeading>
              <PasteOptions>
                <PasteOption aria-label="Manter formatação original"><KeepSourceIcon /></PasteOption>
              </PasteOptions>
              <MenuRule />
              <MenuItem sub>Ações Adici<u>o</u>nais</MenuItem>
            </Menu>
          </Word>
        </Page>
      </Workspace>
    </Window>
  );
}
